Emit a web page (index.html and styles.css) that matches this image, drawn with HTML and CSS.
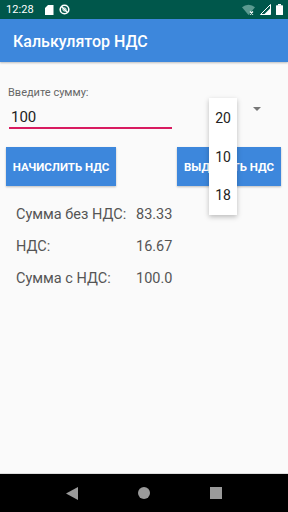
FILE: index.html
```html
<!DOCTYPE html>
<html lang="ru">
<head>
<meta charset="utf-8">
<link rel="stylesheet" href="styles.css">
</head>
<body>
<div class="screen">
  <div class="status">
    <span class="time">12:28</span>
    <svg class="sicon" width="9" height="10" viewBox="0 0 9 10"><path d="M3 0H8.5V10H0V3Z" fill="#fff"/></svg>
    <svg class="sicon" width="11" height="11" viewBox="0 0 11 11"><circle cx="5.5" cy="5.5" r="4.3" fill="none" stroke="#fff" stroke-width="1.6"/><path d="M2.5 2.5L8.5 8.5" stroke="#fff" stroke-width="1.6"/><circle cx="5.5" cy="5.5" r="1.6" fill="none" stroke="#fff" stroke-width="1"/></svg>
    <span class="spacer"></span>
    <svg class="sicon" width="13" height="11" viewBox="0 0 13 11"><path d="M0 3.2A9.5 9.5 0 0 1 13 3.2L6.5 11Z" fill="#5a9a90"/><path d="M8 7.5L11 10.5M11 7.5L8 10.5" stroke="#fff" stroke-width="1.2"/></svg>
    <svg class="sicon" width="11" height="11" viewBox="0 0 11 11"><path d="M10.5 0.5V10.5H0.5Z" fill="none" stroke="#fff" stroke-width="1"/><path d="M10.5 4V10.5H4Z" fill="#fff"/></svg>
    <svg class="sicon" width="7" height="11" viewBox="0 0 7 11"><rect x="2" y="0" width="3" height="1.5" fill="#fff"/><rect x="0" y="1.2" width="7" height="9.8" rx="0.6" fill="#fff"/></svg>
  </div>
  <div class="appbar">Калькулятор НДС</div>
  <div class="content">
    <div class="form-row">
      <div class="field">
        <div class="label">Введите сумму:</div>
        <div class="input">100</div>
      </div>
      <div class="spinner"><span class="arrow"></span></div>
    </div>
    <div class="buttons">
      <div class="btn btn-add">НАЧИСЛИТЬ НДС</div>
      <div class="btn btn-extract">ВЫДЕЛИТЬ НДС</div>
    </div>
    <div class="results">
      <span>Сумма без НДС:</span><span>83.33</span>
      <span>НДС:</span><span>16.67</span>
      <span>Сумма с НДС:</span><span>100.0</span>
    </div>
    <div class="popup">
      <div class="opt">20</div>
      <div class="opt">10</div>
      <div class="opt">18</div>
    </div>
  </div>
  <div class="navbar">
    <svg width="12" height="13" viewBox="0 0 12 13"><path d="M12 0V13L0 6.5Z" fill="#9a9a9a"/></svg>
    <svg width="12" height="12" viewBox="0 0 12 12"><circle cx="6" cy="6" r="6" fill="#9a9a9a"/></svg>
    <svg width="12" height="12" viewBox="0 0 12 12"><rect width="12" height="12" fill="#9a9a9a"/></svg>
  </div>
</div>
</body>
</html>
```
FILE: styles.css
```css
* { box-sizing: border-box; }
html, body { margin: 0; padding: 0; }
body { font-family: Roboto, "Noto Sans", sans-serif; background: #000; }
.screen { width: 288px; height: 512px; display: flex; flex-direction: column; overflow: hidden; }
.status { height: 19px; background: #00574b; display: flex; align-items: center; padding: 0 5px 0 6px; gap: 5px; color: #fff; }
.time { font-size: 11px; margin-right: 6px; letter-spacing: 0.1px; }
.spacer { flex: 1; }
.sicon { display: block; }
.appbar { height: 43px; background: #3d87dc; color: #fff; font-size: 16px; font-weight: 500; padding-left: 13px; display: flex; align-items: center; padding-top: 1px; box-shadow: 0 1px 2px rgba(0,0,0,0.25); position: relative; z-index: 1; }
.content { flex: 1; background: #fafafa; position: relative; padding-top: 24px; }
.form-row { display: flex; }
.field { margin-left: 8px; width: 164px; }
.label { font-size: 11px; line-height: 13px; color: #666; }
.input { font-size: 15px; color: #222; line-height: 20px; padding: 8px 0 0 2px; margin-left: 1px; border-bottom: 2px solid #d81b60; height: 30px; }
.spinner { flex: 1; position: relative; }
.arrow { position: absolute; left: 81px; top: 21px; width: 0; height: 0; border-left: 4px solid transparent; border-right: 4px solid transparent; border-top: 4px solid #777; }
.buttons { display: flex; justify-content: space-between; margin: 18px 7px 0 6px; }
.btn { height: 39px; background: #3d87dc; color: #fff; font-size: 11.5px; font-weight: 700; display: flex; align-items: center; justify-content: center; box-shadow: 0 1px 2px rgba(0,0,0,0.25); }
.btn-add { width: 110px; }
.btn-extract { width: 104px; }
.results { display: grid; grid-template-columns: 120px auto; grid-auto-rows: 32px; margin: 13px 0 0 16px; font-size: 14.5px; color: #555; line-height: 32px; }
.popup { position: absolute; left: 209px; top: 36px; width: 28px; height: 117px; background: #fff; box-shadow: 0 2px 5px rgba(0,0,0,0.25); display: flex; flex-direction: column; padding-top: 1px; z-index: 2; }
.opt { height: 38.5px; font-size: 14px; color: #222; display: flex; align-items: center; justify-content: center; }
.navbar { height: 39px; background: #000; border-top: 1px solid #ddd; display: flex; align-items: center; justify-content: center; gap: 60px; }
.navbar svg { display: block; }
```
